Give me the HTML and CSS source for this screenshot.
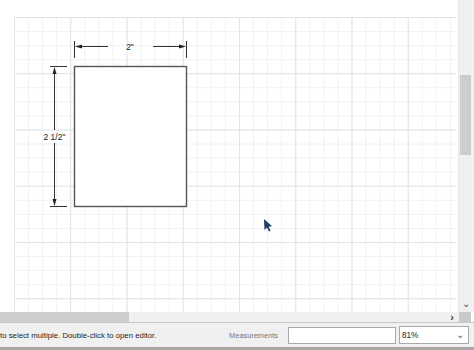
FILE: index.html
```html
<!DOCTYPE html>
<html>
<head>
<meta charset="utf-8">
<link rel="stylesheet" href="styles.css">
</head>
<body>
<div class="app">
  <div class="workarea">
    <div class="canvas">
      <div class="grid"></div>
      <svg class="drawing" width="458" height="312" viewBox="0 0 458 312">
        <rect x="74.5" y="66.5" width="112" height="140" fill="#fff" stroke="#555" stroke-width="1.4"/>
        <g stroke="#333" stroke-width="1" fill="none">
          <line x1="74.5" y1="41" x2="74.5" y2="58"/>
          <line x1="186.5" y1="41" x2="186.5" y2="58"/>
          <line x1="78" y1="46.5" x2="108" y2="46.5"/>
          <line x1="153" y1="46.5" x2="183" y2="46.5"/>
          <line x1="50" y1="66.5" x2="67" y2="66.5"/>
          <line x1="50" y1="206.5" x2="67" y2="206.5"/>
          <line x1="54.5" y1="70" x2="54.5" y2="130"/>
          <line x1="54.5" y1="143" x2="54.5" y2="203"/>
        </g>
        <g fill="#222">
          <polygon points="75,46.5 82,44.5 82,48.5"/>
          <polygon points="186,46.5 179,44.5 179,48.5"/>
          <polygon points="54.5,67 52.5,74 56.5,74"/>
          <polygon points="54.5,206 52.5,199 56.5,199"/>
        </g>
        <text x="130" y="49.5" class="dim">2"</text>
        <text x="54.5" y="140" class="dim">2 1/2"</text>
        <path d="M264 219 L264.5 230 L267 227.5 L269 231.5 L270.6 230.8 L268.6 226.8 L272 226.3 Z" fill="#1d3d63"/>
      </svg>
    </div>
    <div class="vscroll">
      <div class="vthumb"></div>
      <div class="vspacer"></div>
      <span class="arrow-down">&#8964;</span>
    </div>
  </div>
  <div class="hscroll">
    <div class="htrack">
      <div class="hthumb"></div>
      <span class="arrow-right">&#8250;</span>
    </div>
    <div class="corner"></div>
  </div>
  <div class="status">
    <span class="hint">to select multiple. Double-click to open editor.</span>
    <span class="label">Measurements</span>
    <span class="measure-box"></span>
    <span class="zoom-box"><span class="zoom-value">81%</span><span class="chev">&#8964;</span></span>
  </div>
  <div class="bottom-strip"></div>
</div>
</body>
</html>
```

FILE: styles.css
```css
html, body {
  margin: 0;
  padding: 0;
  background: #fff;
}
.app {
  width: 474px;
  height: 350px;
  display: flex;
  flex-direction: column;
  overflow: hidden;
  font-family: "Liberation Sans", Arial, sans-serif;
}
.workarea {
  display: flex;
  height: 312px;
}
.canvas {
  position: relative;
  width: 458px;
  height: 312px;
  box-sizing: border-box;
  padding: 17px 2px 0 14px;
  background: #fff;
}
.grid {
  width: 100%;
  height: 100%;
  background-color: #fff;
  background-image:
    linear-gradient(to right, #e1e5e9 1px, transparent 1px),
    linear-gradient(to bottom, #e1e5e9 1px, transparent 1px),
    linear-gradient(to right, #edf3f5 1px, transparent 1px),
    linear-gradient(to bottom, #edf3f5 1px, transparent 1px);
  background-size: 56.25px 56.25px, 56.25px 56.25px, 14.0625px 14.0625px, 14.0625px 14.0625px;
}
.drawing {
  position: absolute;
  left: 0;
  top: 0;
}
.dim {
  font-family: "Liberation Sans", sans-serif;
  font-size: 8.5px;
  fill: #222;
  text-anchor: middle;
}
.vscroll {
  width: 16px;
  height: 312px;
  box-sizing: border-box;
  background: #f0f0f0;
  border-left: 1px solid #e6e6e6;
  padding: 75px 3px 0 1px;
  display: flex;
  flex-direction: column;
  align-items: stretch;
}
.vthumb {
  width: 11px;
  height: 80px;
  background: #cdcdcd;
}
.vspacer { flex: 1; }
.arrow-down {
  font-size: 10px;
  line-height: 8px;
  height: 12px;
  color: #555;
  text-align: center;
  width: 11px;
}
.hscroll {
  display: flex;
  height: 10px;
  border-bottom: 1px solid #c8c8c8;
}
.htrack {
  width: 459px;
  background: #f0f0f0;
  display: flex;
  align-items: center;
}
.hthumb {
  width: 129px;
  height: 10px;
  background: #cdcdcd;
}
.arrow-right {
  margin-left: auto;
  margin-right: 5px;
  font-size: 11px;
  line-height: 10px;
  font-weight: bold;
  color: #444;
}
.corner {
  width: 12px;
  background: #c9c9c9;
}
.status {
  height: 24px;
  background: #f0f0f0;
  display: flex;
  align-items: center;
  font-size: 7.8px;
  color: #1e1e1e;
  padding-right: 5px;
}
.hint {
  white-space: nowrap;
}
.label {
  margin-left: auto;
  color: #777;
  font-size: 7.4px;
}
.measure-box {
  margin-left: 10px;
  width: 106px;
  height: 15px;
  background: #fff;
  border: 1px solid #a9a9a9;
}
.zoom-box {
  margin-left: 3px;
  width: 68px;
  height: 16px;
  background: #fff;
  border: 1px solid #a9a9a9;
  display: flex;
  align-items: center;
  justify-content: space-between;
}
.zoom-value {
  padding-left: 2px;
  color: #222;
  font-size: 8.2px;
}
.chev {
  color: #666;
  font-size: 10px;
  line-height: 8px;
  padding-right: 4px;
}
.bottom-strip {
  height: 3px;
  background: #a7a7a7;
}
```
